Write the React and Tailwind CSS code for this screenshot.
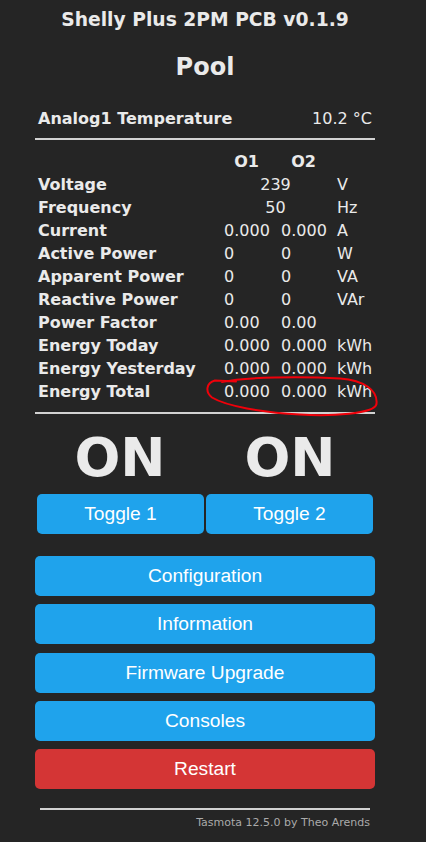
const rows = [
  ['Voltage', '239', null, 'V'],
  ['Frequency', '50', null, 'Hz'],
  ['Current', '0.000', '0.000', 'A'],
  ['Active Power', '0', '0', 'W'],
  ['Apparent Power', '0', '0', 'VA'],
  ['Reactive Power', '0', '0', 'VAr'],
  ['Power Factor', '0.00', '0.00', ''],
  ['Energy Today', '0.000', '0.000', 'kWh'],
  ['Energy Yesterday', '0.000', '0.000', 'kWh'],
  ['Energy Total', '0.000', '0.000', 'kWh'],
]

const buttons = ['Configuration', 'Information', 'Firmware Upgrade', 'Consoles']

function Btn({ children, red }) {
  return (
    <button className={`w-full h-[40px] rounded-[5px] text-white text-[19.2px] leading-[40px] font-['Liberation_Sans',Arial,sans-serif] ${red ? 'bg-[#d43535]' : 'bg-[#1fa3ec]'}`}>
      {children}
    </button>
  )
}

export default function App() {
  return (
    <div className="min-h-screen bg-[#252525] text-[#eaeaea] font-['DejaVu_Sans',Verdana,sans-serif]">
      <div className="relative w-[340px] ml-[35px] pt-[9px] pb-[10px]">
        {/* Header */}
        <h3 className="text-center font-bold text-[18.72px] leading-[22px]">Shelly Plus 2PM PCB v0.1.9</h3>
        <h2 className="text-center font-bold text-[24px] leading-[28px] mt-[21.5px]">Pool</h2>

        {/* Sensors */}
        <div className="flex justify-between px-[3px] mt-[26.3px] text-[16px] leading-[23px]">
          <span className="font-bold">Analog1 Temperature</span>
          <span>10.2 °C</span>
        </div>
        <div className="h-[2px] bg-[#d2d2d2] mt-[8px]" />

        <div className="pl-[3px] mt-[10px] text-[16px] leading-[23px]">
          <div className="grid grid-cols-[186px_57px_56px_1fr] h-[23px] font-bold">
            <span />
            <span className="w-[45px] text-center">O1</span>
            <span className="w-[45px] text-center">O2</span>
            <span />
          </div>
          {rows.map(([label, a, b, unit]) => (
            <div key={label} className="grid grid-cols-[186px_57px_56px_1fr] h-[23px]">
              <span className="font-bold whitespace-nowrap">{label}</span>
              {b === null ? (
                <span className="col-span-2 w-[103px] text-center">{a}</span>
              ) : (
                <>
                  <span>{a}</span>
                  <span>{b}</span>
                </>
              )}
              <span>{unit}</span>
            </div>
          ))}
        </div>
        <div className="h-[2px] bg-[#d2d2d2] mt-[9px]" />

        {/* Relay state */}
        <div className="flex mt-[14.6px]">
          <div className="w-1/2 text-center font-bold text-[54px] leading-[60px]">ON</div>
          <div className="w-1/2 text-center font-bold text-[54px] leading-[60px]">ON</div>
        </div>
        <div className="flex gap-[2px] px-[2px] mt-[5.4px]">
          <Btn>Toggle 1</Btn>
          <Btn>Toggle 2</Btn>
        </div>

        {/* Menu */}
        <div className="flex flex-col gap-[8.4px] mt-[22px]">
          {buttons.map(b => <Btn key={b}>{b}</Btn>)}
          <Btn red>Restart</Btn>
        </div>

        {/* Footer */}
        <div className="mx-[5px] h-[2px] bg-[#d2d2d2] mt-[18.4px]" />
        <p className="text-right pr-[5px] mt-[6.4px] text-[11px] leading-[13px] text-[#aaaaaa]">Tasmota 12.5.0 by Theo Arends</p>

        {/* hand-drawn annotation */}
        <svg className="absolute left-[-35px] top-0 pointer-events-none" width="426" height="842" viewBox="0 0 426 842" fill="none">
          <path
            d="M222 382 C245 377 300 376 340 378.5 C364 380.5 378 390 376.5 404 C375 414 330 416.5 300 414.5 C262 412.5 226 406 212 397.5 C205 392 206 383 215 380.5 L236 381.5"
            stroke="#f0000a"
            strokeWidth="2"
            strokeLinecap="round"
          />
        </svg>
      </div>
    </div>
  )
}
